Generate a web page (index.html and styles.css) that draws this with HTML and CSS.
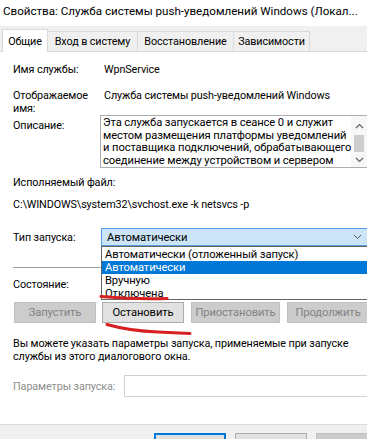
FILE: index.html
```html
<!DOCTYPE html>
<html lang="ru">
<head>
<meta charset="utf-8">
<link rel="stylesheet" href="styles.css">
</head>
<body>
<div class="titlebar">Свойства: Служба системы push-уведомлений Windows (Локал...</div>
<div class="tabs">
  <div class="tab active w1">Общие</div>
  <div class="tab w2">Вход в систему</div>
  <div class="tab w3">Восстановление</div>
  <div class="tab w4">Зависимости</div>
</div>
<div class="page">
  <div class="row r-name"><div class="label">Имя службы:</div><div class="value">WpnService</div></div>
  <div class="row r-disp"><div class="label">Отображаемое<br>имя:</div><div class="value">Служба системы push-уведомлений Windows</div></div>
  <div class="row r-desc"><div class="label">Описание:</div>
    <div class="descbox">
      <div class="desctext">Эта служба запускается в сеансе 0 и служит<br>местом размещения платформы уведомлений<br>и поставщика подключений, обрабатывающего<br>соединение между устройством и сервером</div>
      <div class="scroll">
        <svg class="sarrow" width="9" height="6" viewBox="0 0 9 6"><path d="M1 5 L4.5 1.5 L8 5" fill="none" stroke="#606060" stroke-width="1.2"/></svg>
        <div class="thumb"></div>
        <svg class="sarrow" width="9" height="6" viewBox="0 0 9 6"><path d="M1 1 L4.5 4.5 L8 1" fill="none" stroke="#606060" stroke-width="1.2"/></svg>
      </div>
    </div>
  </div>
  <div class="single r-exe">Исполняемый файл:</div>
  <div class="single r-path">C:\WINDOWS\system32\svchost.exe -k netsvcs -p</div>
  <div class="row r-type"><div class="label">Тип запуска:</div>
    <div class="combo"><span>Автоматически</span>
      <svg width="9" height="6" viewBox="0 0 9 6"><path d="M1 1 L4.5 4.5 L8 1" fill="none" stroke="#505050" stroke-width="1"/></svg>
    </div>
  </div>
  <div class="sep"></div>
  <div class="single r-state">Состояние:</div>
  <div class="buttons">
    <div class="btn dis b1">Запустить</div>
    <div class="btn b2">Остановить</div>
    <div class="btn dis b3">Приостановить</div>
    <div class="btn dis b4">Продолжить</div>
  </div>
  <div class="note">Вы можете указать параметры запуска, применяемые при запуске<br>службы из этого диалогового окна.</div>
  <div class="row r-params"><div class="label gray">Параметры запуска:</div><div class="input"></div></div>

  <div class="dropdown">
    <div class="item">Автоматически (отложенный запуск)</div>
    <div class="item sel">Автоматически</div>
    <div class="item">Вручную</div>
    <div class="item">Отключена</div>
  </div>
</div>
<div class="footer">
  <div class="fbtn ok">ОК</div>
  <div class="fbtn">Отмена</div>
  <div class="fbtn dis">Применить</div>
</div>
<svg class="marks" width="367" height="439" viewBox="0 0 367 439">
  <path d="M101 296.5 Q 135 299.5 167 298.5" fill="none" stroke="#d81f1f" stroke-width="3" stroke-linecap="round"/>
  <path d="M107 324.5 Q 130 331 158 332 Q 178 333 190 333.5" fill="none" stroke="#d81f1f" stroke-width="3" stroke-linecap="round"/>
</svg>
</body>
</html>
```

FILE: styles.css
```css
html, body {
  margin: 0;
  padding: 0;
}
body {
  width: 367px;
  height: 439px;
  overflow: hidden;
  position: relative;
  background: #f0f0f0;
  font-family: Roboto, "Liberation Sans", sans-serif;
  font-size: 10.8px;
  letter-spacing: -0.1px;
  color: #000;
}
.titlebar {
  height: 26px;
  background: #fff;
  padding-left: 3px;
  font-size: 11.6px;
  letter-spacing: 0;
  line-height: 22px;
  white-space: nowrap;
  overflow: hidden;
}
.tabs {
  display: flex;
  align-items: flex-end;
  height: 26px;
  padding-left: 2px;
  box-sizing: border-box;
  border-bottom: 1px solid #d9d9d9;
}
.tab {
  height: 20px;
  box-sizing: border-box;
  border: 1px solid #d9d9d9;
  border-bottom: none;
  margin-left: -1px;
  background: #f0f0f0;
  text-align: center;
  line-height: 19px;
  white-space: nowrap;
}
.tab.active {
  height: 23px;
  margin-bottom: -1px;
  background: #fff;
  line-height: 23px;
  position: relative;
  z-index: 1;
}
.w1 { width: 46px; margin-left: 0; }
.w2 { width: 91px; }
.w3 { width: 97px; }
.w4 { width: 77px; }
.page {
  position: relative;
  height: 372px;
  background: #fff;
  padding-left: 13px;
  box-sizing: border-box;
  line-height: 13px;
}
.row {
  display: flex;
  align-items: flex-start;
}
.label {
  width: 91px;
  flex: none;
  white-space: nowrap;
}
.value { white-space: nowrap; }
.gray { color: #8d8d8d; }
.r-name { padding-top: 11px; }
.r-disp { padding-top: 13px; }
.r-desc .label { padding-top: 4px; }
.descbox {
  margin-left: -4px;
  flex: 1;
  height: 53px;
  box-sizing: border-box;
  border: 1px solid #adadad;
  border-right: none;
  display: flex;
  overflow: hidden;
}
.desctext {
  flex: 1;
  padding: 1px 2px 0 2px;
  font-size: 11.2px;
  line-height: 12.7px;
  white-space: nowrap;
  overflow: hidden;
}
.scroll {
  width: 16px;
  flex: none;
  background: #f7f7f7;
  display: flex;
  flex-direction: column;
  align-items: center;
  padding-top: 7px;
}
.sarrow { display: block; }
.thumb {
  width: 10px;
  height: 17px;
  margin: 6px 0 5px;
  background: #cdcdcd;
}
.single { white-space: nowrap; }
.r-exe { padding-top: 8px; }
.r-path { padding-top: 9px; }
.r-type { padding-top: 17px; }
.r-type .label { padding-top: 3px; }
.combo {
  margin-left: -3px;
  flex: 1;
  height: 18px;
  box-sizing: border-box;
  border: 1px solid #569de5;
  border-right: none;
  background: #cce4f7;
  display: flex;
  align-items: center;
  justify-content: space-between;
  padding: 0 5px 0 5px;
  font-size: 11.2px;
}
.sep {
  margin-top: 21px;
  height: 1px;
  background: #a0a0a0;
}
.r-state { padding-top: 10px; }
.buttons {
  display: flex;
  margin-top: 11px;
  height: 21px;
}
.btn {
  height: 21px;
  box-sizing: border-box;
  border: 1px solid #adadad;
  background: #e1e1e1;
  text-align: center;
  line-height: 19px;
  white-space: nowrap;
  flex: none;
  font-size: 11.2px;
}
.btn.dis {
  background: #cccccc;
  border-color: #bfbfbf;
  color: #838383;
}
.b1 { width: 82px; margin-left: 1px; }
.b2 { width: 82px; margin-left: 6px; }
.b3 { width: 89px; margin-left: 7px; }
.b4 { width: 82px; margin-left: 7px; }
.note {
  margin-top: 14px;
  white-space: nowrap;
}
.r-params { padding-top: 12px; align-items: center; }
.r-params .label { width: 111px; }
.input {
  flex: 1;
  height: 22px;
  box-sizing: border-box;
  border: 1px solid #d0d0d0;
  border-right: none;
}
.dropdown {
  position: absolute;
  left: 101px;
  top: 194px;
  width: 266px;
  height: 54px;
  box-sizing: border-box;
  border: 1px solid #646464;
  border-right: none;
  background: #fff;
  padding-top: 1px;
  font-size: 11.2px;
}
.item {
  height: 13px;
  line-height: 13px;
  padding-left: 3px;
  white-space: nowrap;
}
.item.sel {
  background: #0078d7;
  color: #fff;
}
.footer {
  border-top: 1px solid #dadada;
  height: 15px;
  display: flex;
  padding-left: 154px;
  padding-top: 8px;
  box-sizing: border-box;
}
.fbtn {
  width: 72px;
  height: 22px;
  flex: none;
  box-sizing: border-box;
  border: 1px solid #adadad;
  background: #e1e1e1;
  margin-right: 9px;
  text-align: center;
  line-height: 20px;
}
.fbtn.ok { border: 2px solid #0078d7; }
.fbtn.dis { background: #cccccc; border-color: #bfbfbf; color: #838383; }
.marks {
  position: absolute;
  left: 0;
  top: 0;
  pointer-events: none;
}
```
